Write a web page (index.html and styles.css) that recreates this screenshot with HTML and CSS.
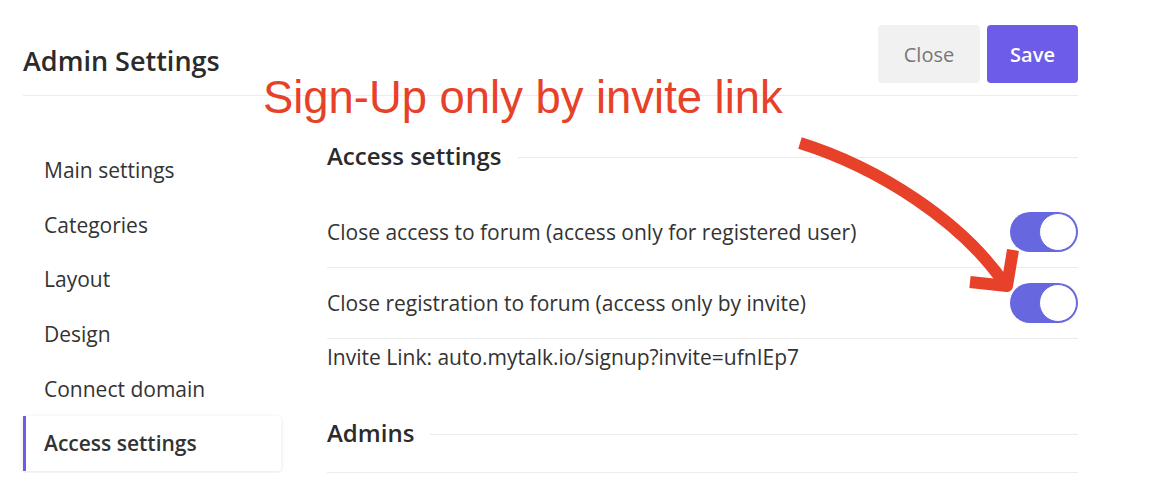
FILE: index.html
```html
<!DOCTYPE html>
<html>
<head>
    <title>Admin Settings</title>
    <link rel="stylesheet" href="styles.css">
</head>
<body>
    <div class="settings">
        <div class="header">
            <h1 class="title">Admin Settings</h1>
            <div class="actions">
                <button class="btn btn-close">Close</button>
                <button class="btn btn-save">Save</button>
            </div>
        </div>
        <div class="main">
            <ul class="menu">
                <li class="menu-item">Main settings</li>
                <li class="menu-item">Categories</li>
                <li class="menu-item">Layout</li>
                <li class="menu-item">Design</li>
                <li class="menu-item">Connect domain</li>
                <li class="menu-item active">Access settings</li>
            </ul>
            <div class="content">
                <div class="section-title">
                    <span>Access settings</span>
                    <div class="section-line"></div>
                </div>
                <div class="rows">
                    <div class="row">
                        <span>Close access to forum (access only for registered user)</span>
                        <div class="toggle on"><div class="knob"></div></div>
                    </div>
                    <div class="row">
                        <span>Close registration to forum (access only by invite)</span>
                        <div class="toggle on"><div class="knob"></div></div>
                    </div>
                </div>
                <div class="invite">Invite Link: auto.mytalk.io/signup?invite=ufnIEp7</div>
                <div class="section-title admins">
                    <span>Admins</span>
                    <div class="section-line"></div>
                </div>
                <div class="bottom-line"></div>
            </div>
        </div>
    </div>

    <!-- annotation drawn on top of the screenshot -->
    <div class="note">Sign-Up only by invite link</div>
    <svg class="arrow" width="1151" height="491" viewBox="0 0 1151 491">
        <path d="M800 143 C880 168 962 222 1004 283" fill="none" stroke="#e8412a" stroke-width="12"/>
        <path d="M1013 250 L1007 286 L970 282" fill="none" stroke="#e8412a" stroke-width="12" stroke-linejoin="round"/>
    </svg>
</body>
</html>
```

FILE: styles.css
```css
body {
    margin: 0;
    background-color: #fff;
    font-family: "Open Sans", Arial, sans-serif;
    color: #333;
}
.settings {
    width: 1055px;
    margin-left: 23px;
}
.header {
    display: flex;
    justify-content: space-between;
    align-items: flex-end;
    padding-top: 25px;
    padding-bottom: 12px;
    border-bottom: 1px solid #ececec;
}
.title {
    margin: 0 0 7px 0;
    font-size: 27px;
    font-weight: 600;
    line-height: 30px;
    color: #2b2b2b;
}
.actions {
    display: flex;
    gap: 7px;
}
.btn {
    height: 58px;
    border: none;
    border-radius: 4px;
    font-family: "Open Sans", Arial, sans-serif;
    font-size: 20px;
    cursor: pointer;
}
.btn-close {
    width: 102px;
    background-color: #f1f1f1;
    color: #777;
}
.btn-save {
    width: 91px;
    background-color: #6c5ce7;
    color: #fff;
    font-weight: 600;
}
.main {
    display: flex;
    gap: 46px;
}
.menu {
    list-style: none;
    margin: 0;
    padding: 47px 0 0 0;
    width: 258px;
}
.menu-item {
    height: 54.6px;
    display: flex;
    align-items: center;
    padding-left: 21px;
    font-size: 21px;
    color: #333;
}
.menu-item.active {
    font-weight: 600;
    background-color: #fff;
    border-left: 3px solid #6c5ce7;
    padding-left: 18px;
    border-radius: 0 4px 4px 0;
    box-shadow: 0 1px 5px rgba(0, 0, 0, 0.1);
}
.content {
    flex: 1;
    padding-top: 46px;
}
.section-title {
    display: flex;
    align-items: center;
    gap: 16px;
    height: 26px;
    font-size: 24px;
    font-weight: 600;
    color: #2b2b2b;
}
.section-line {
    flex: 1;
    height: 1px;
    margin-top: 5px;
    background-color: #ececec;
}
.rows {
    margin-top: 29px;
}
.row {
    display: flex;
    justify-content: space-between;
    align-items: center;
    height: 70px;
    border-bottom: 1px solid #ececec;
    font-size: 21px;
}
.toggle {
    width: 68px;
    height: 40px;
    border-radius: 20px;
    background-color: #6767e0;
    display: flex;
    justify-content: flex-end;
    align-items: center;
    padding: 0 1px;
    box-sizing: border-box;
}
.knob {
    width: 36px;
    height: 36px;
    border-radius: 50%;
    background-color: #fff;
    border: 1px solid #6767e0;
}
.invite {
    margin-top: 4px;
    line-height: 28px;
    font-size: 21px;
}
.admins {
    margin-top: 48px;
}
.bottom-line {
    margin-top: 27px;
    height: 1px;
    background-color: #ececec;
}
.note {
    position: absolute;
    left: 263px;
    top: 75px;
    font-family: "Liberation Sans", Arial, sans-serif;
    font-size: 45.4px;
    line-height: 1;
    color: #e8412a;
}
.arrow {
    position: absolute;
    left: 0;
    top: 0;
    pointer-events: none;
}
```
